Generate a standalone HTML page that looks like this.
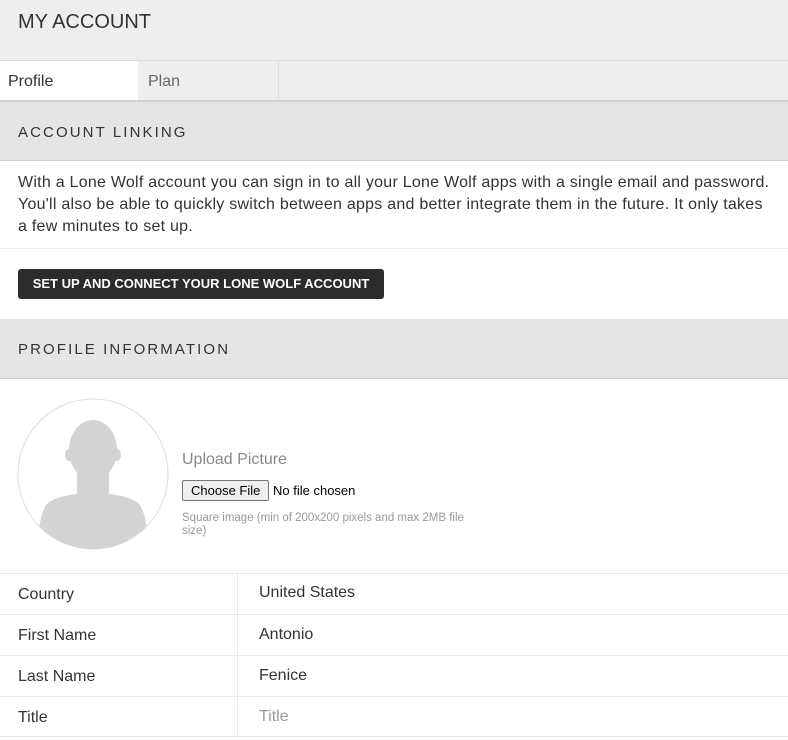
<html><head><style>
*{margin:0;padding:0;box-sizing:border-box}
body{width:788px;height:740px;overflow:hidden;background:#fff;font-family:"Liberation Sans",sans-serif;color:#333;position:relative}
.a{position:absolute}
.hd{left:0;width:788px;background:#e5e5e5;border-bottom:1px solid #d0d0d0}
.hd span{position:absolute;left:18px;font-size:15px;letter-spacing:2.1px;color:#333}
.row{left:0;width:788px;height:41px;border-top:1px solid #e8e8e8}
.row .l{position:absolute;left:18px;top:12px;font-size:16px;color:#333}
.row .v{position:absolute;left:237px;top:0;height:41px;width:551px;border-left:1px solid #e8e8e8;padding:11px 0 0 21px;font-size:16px;color:#333}
</style></head><body>
<div class="a" style="left:0;top:0;width:788px;height:60px;background:#eee"></div>
<div class="a" style="left:18px;top:11px;font-size:20px;color:#333">MY ACCOUNT</div>
<div class="a" style="left:0;top:60px;width:788px;height:42px;background:#eee;border-top:1px solid #ddd;border-bottom:2px solid #d0d0d0"></div>
<div class="a" style="left:0;top:61px;width:138px;height:39px;background:#fff"></div>
<div class="a" style="left:8px;top:73px;font-size:16px;color:#333">Profile</div>
<div class="a" style="left:278px;top:61px;width:1px;height:39px;background:#ddd"></div>
<div class="a" style="left:148px;top:73px;font-size:16px;color:#666">Plan</div>
<div class="a hd" style="top:102px;height:59px"><span style="top:22px">ACCOUNT LINKING</span></div>
<div class="a" style="left:18px;top:172px;width:780px;white-space:nowrap;font-size:16px;letter-spacing:0.25px;line-height:22px;color:#333">With a Lone Wolf account you can sign in to all your Lone Wolf apps with a single email and password.<br>You'll also be able to quickly switch between apps and better integrate them in the future. It only takes<br>a few minutes to set up.</div>
<div class="a" style="left:0;top:248px;width:788px;height:1px;background:#eee"></div>
<div class="a" style="left:18px;top:269px;width:366px;height:30px;background:#2b2b2b;border-radius:3px;color:#fff;font-size:13px;font-weight:bold;padding-top:7px;text-align:center">SET UP AND CONNECT YOUR LONE WOLF ACCOUNT</div>
<div class="a hd" style="top:319px;height:60px"><span style="top:22px">PROFILE INFORMATION</span></div>
<svg class="a" style="left:17px;top:398px" width="152" height="152" viewBox="0 0 152 152"><defs><clipPath id="c"><circle cx="76" cy="76" r="75"/></clipPath></defs><circle cx="76" cy="76" r="75" fill="#fff" stroke="#ddd"/><g clip-path="url(#c)" fill="#d3d3d3"><ellipse cx="76" cy="52" rx="24" ry="30"/><ellipse cx="52" cy="57" rx="4" ry="6"/><ellipse cx="100" cy="57" rx="4" ry="6"/><path d="M60 70h32v28H60z"/><path d="M76 95c-20 0-38 4-45 10-6 5-9 20-11 47h112c-2-27-5-42-11-47-7-6-25-10-45-10z"/></g></svg>
<div class="a" style="left:182px;top:451px;font-size:16px;color:#888">Upload Picture</div>
<div class="a" style="left:182px;top:480px;width:87px;height:21px;border:1px solid #767676;border-radius:2px;background:#efefef;font-size:13px;color:#000;padding:2px 0 0 8px">Choose File</div>
<div class="a" style="left:273px;top:483px;font-size:13px;color:#000">No file chosen</div>
<div class="a" style="left:182px;top:512px;width:300px;font-size:11.5px;line-height:13px;color:#999">Square image (min of 200x200 pixels and max 2MB file size)</div>
<div class="a row" style="top:573px"><div class="l">Country</div><div class="v" style="padding-top:10px">United States</div></div>
<div class="a row" style="top:614px"><div class="l">First Name</div><div class="v">Antonio</div></div>
<div class="a row" style="top:655px"><div class="l">Last Name</div><div class="v">Fenice</div></div>
<div class="a row" style="top:696px;border-bottom:1px solid #e8e8e8"><div class="l">Title</div><div class="v" style="color:#999">Title</div></div>
</body></html>
